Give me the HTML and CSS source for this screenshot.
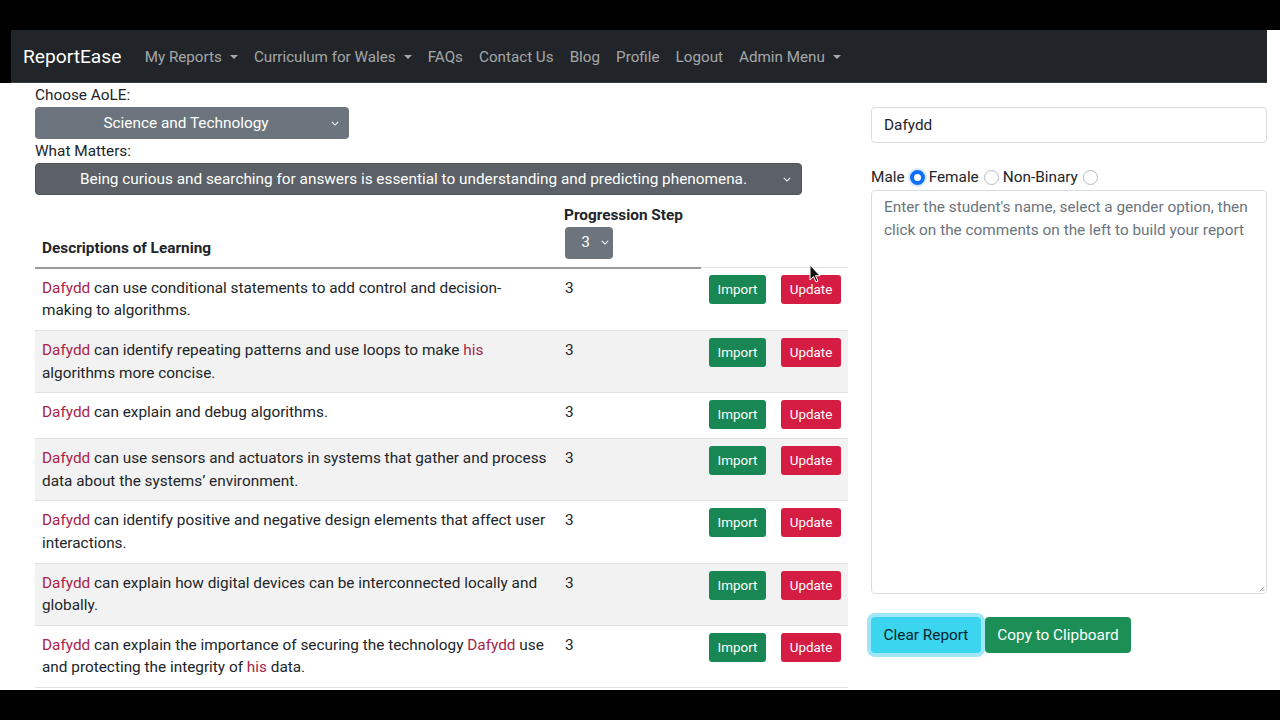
FILE: index.html
```html
<!DOCTYPE html>
<html>
<head>
<meta charset="utf-8">
<link rel="stylesheet" href="styles.css">
</head>
<body>
<div class="frame-top"></div>
<div class="page">
  <div class="header-row">
    <div class="edge"></div>
    <nav class="navbar">
      <span class="brand">ReportEase</span>
      <span class="nav-link">My Reports<span class="caret"></span></span>
      <span class="nav-link">Curriculum for Wales<span class="caret"></span></span>
      <span class="nav-link">FAQs</span>
      <span class="nav-link">Contact Us</span>
      <span class="nav-link">Blog</span>
      <span class="nav-link">Profile</span>
      <span class="nav-link">Logout</span>
      <span class="nav-link">Admin Menu<span class="caret"></span></span>
    </nav>
  </div>
  <div class="main">
    <div class="left">
      <div class="label">Choose AoLE:</div>
      <div class="select sel-aole"><span class="sel-text">Science and Technology</span><svg class="chev" viewBox="0 0 10 6" width="8" height="5"><path d="M1 1l4 4 4-4" fill="none" stroke="#fff" stroke-width="1.3"/></svg></div>
      <div class="label">What Matters:</div>
      <div class="select sel-matters"><span class="sel-text">Being curious and searching for answers is essential to understanding and predicting phenomena.</span><svg class="chev" viewBox="0 0 10 6" width="8" height="5"><path d="M1 1l4 4 4-4" fill="none" stroke="#fff" stroke-width="1.3"/></svg></div>
      <table class="dol">
        <colgroup><col class="c1"><col class="c2"><col class="c3"><col class="c4"></colgroup>
        <thead>
          <tr>
            <th class="th-desc">Descriptions of Learning</th>
            <th class="th-step">Progression Step
              <div class="select sel-step"><span class="sel-text">3</span><svg class="chev" viewBox="0 0 10 6" width="8" height="5"><path d="M1 1l4 4 4-4" fill="none" stroke="#fff" stroke-width="1.3"/></svg></div>
            </th>
          </tr>
        </thead>
        <tbody>
          <tr><td><span class="nm">Dafydd</span> can use conditional statements to add control and decision-making to algorithms.</td><td>3</td><td><span class="btn btn-imp">Import</span></td><td><span class="btn btn-upd">Update</span></td></tr>
          <tr><td><span class="nm">Dafydd</span> can identify repeating patterns and use loops to make <span class="nm">his</span> algorithms more concise.</td><td>3</td><td><span class="btn btn-imp">Import</span></td><td><span class="btn btn-upd">Update</span></td></tr>
          <tr><td><span class="nm">Dafydd</span> can explain and debug algorithms.</td><td>3</td><td><span class="btn btn-imp">Import</span></td><td><span class="btn btn-upd">Update</span></td></tr>
          <tr><td><span class="nm">Dafydd</span> can use sensors and actuators in systems that gather and process data about the systems’ environment.</td><td>3</td><td><span class="btn btn-imp">Import</span></td><td><span class="btn btn-upd">Update</span></td></tr>
          <tr><td><span class="nm">Dafydd</span> can identify positive and negative design elements that affect user interactions.</td><td>3</td><td><span class="btn btn-imp">Import</span></td><td><span class="btn btn-upd">Update</span></td></tr>
          <tr><td><span class="nm">Dafydd</span> can explain how digital devices can be interconnected locally and globally.</td><td>3</td><td><span class="btn btn-imp">Import</span></td><td><span class="btn btn-upd">Update</span></td></tr>
          <tr><td><span class="nm">Dafydd</span> can explain the importance of securing the technology <span class="nm">Dafydd</span> use and protecting the integrity of <span class="nm">his</span> data.</td><td>3</td><td><span class="btn btn-imp">Import</span></td><td><span class="btn btn-upd">Update</span></td></tr>
        </tbody>
      </table>
    </div>
    <div class="right">
      <div class="input">Dafydd</div>
      <div class="gender">
        <span>Male</span><span class="radio checked"></span>
        <span>Female</span><span class="radio"></span>
        <span>Non-Binary</span><span class="radio"></span>
      </div>
      <div class="textarea">Enter the student's name, select a gender option, then click on the comments on the left to build your report
        <svg class="grip" viewBox="0 0 8 8" width="7" height="7"><path d="M7 2L2 7M7 5L5 7" stroke="#888" stroke-width="1"/></svg>
      </div>
      <div class="actions">
        <span class="btn-lg btn-clear">Clear Report</span>
        <span class="btn-lg btn-copy">Copy to Clipboard</span>
      </div>
    </div>
  </div>
  <svg class="cursor" viewBox="0 0 12 19" width="12" height="19"><path d="M1 1v15l3.5-3.5 2.5 5.5 2-1-2.5-5.3H11z" fill="#111" stroke="#fff" stroke-width="1"/></svg>
</div>
<div class="frame-bottom"></div>
</body>
</html>
```
FILE: styles.css
```css
* { box-sizing: border-box; }
html, body { margin: 0; padding: 0; }
body {
  width: 1280px;
  height: 720px;
  overflow: hidden;
  background: #000;
  font-family: Roboto, "Liberation Sans", sans-serif;
  font-size: 15.35px;
  line-height: 22.8px;
  color: #212529;
}
.frame-top { height: 30px; background: #000; }
.frame-bottom { height: 30px; background: #000; }
.page {
  position: relative;
  height: 660px;
  background: #fff;
  overflow: hidden;
}
.header-row { display: flex; height: 53px; }
.edge { width: 11px; background: #000; }
.navbar {
  width: 1256px;
  background: #212529;
  display: flex;
  align-items: center;
  padding-left: 12px;
  padding-top: 2px;
  border-bottom: 1px solid #3a3e42;
  font-size: 15.2px;
}
.brand {
  color: #fff;
  font-size: 19.2px;
  margin-right: 15.5px;
}
.nav-link {
  color: rgba(255,255,255,0.6);
  padding: 0 7.8px;
  display: inline-flex;
  align-items: center;
}
.nav-link + .nav-link { margin-left: 0.5px; }
.caret {
  display: inline-block;
  margin-left: 8px;
  border-top: 4.6px solid rgba(255,255,255,0.6);
  border-left: 4.6px solid transparent;
  border-right: 4.6px solid transparent;
}
.main {
  display: flex;
  padding-left: 35px;
}
.left { width: 813px; }
.right {
  width: 396px;
  margin-left: 23px;
  padding-top: 24px;
}
.label { height: 24px; line-height: 24px; }
.select {
  display: flex;
  align-items: center;
  height: 32px;
  background: #6c757d;
  color: #fff;
  border-radius: 4px;
  padding: 0 10px 0 12px;
}
.sel-text { flex: 1; text-align: center; }
.sel-aole { width: 314px; }
.sel-aole .sel-text { padding-left: 2px; padding-right: 8px; }
.sel-matters { width: 767px; background: #5b6166; border: 1px solid #4d5357; }
.sel-matters .sel-text { padding-right: 4px; }
.sel-step { width: 48px; margin-left: 1px; padding: 0 4px 0 8px; font-weight: 400; }
.sel-step .sel-text { padding-right: 3px; }
.chev { flex: none; }
.dol {
  width: 813px;
  border-collapse: collapse;
  table-layout: fixed;
}
.c1 { width: 522px; }
.c2 { width: 144px; }
.c3 { width: 73px; }
.c4 { width: 74px; }
.dol th {
  text-align: left;
  vertical-align: bottom;
  padding: 9px 7px 7px 7px;
  font-weight: 700;
  border-bottom: 2px solid #9a9a9a;
}
.dol th.th-step { padding-bottom: 8px; }
.dol td {
  vertical-align: top;
  padding: 8px 7px 8px;
  line-height: 22.6px;
  border-top: 1px solid #dee2e6;
  border-bottom: 1px solid #dee2e6;
}
.dol td:nth-child(2) { padding-left: 8px; }
.dol td:nth-child(3), .dol td:nth-child(4) { padding-top: 7px; padding-bottom: 9px; }
.dol tbody tr:nth-child(even) td { background: #f2f2f2; }
.nm { color: #a8244a; }
.btn {
  display: inline-block;
  height: 29px;
  line-height: 29px;
  font-size: 13.4px;
  border-radius: 3px;
  color: #fff;
  text-align: center;
}
.btn-imp { background: #198754; width: 57px; margin-left: 1px; }
.btn-upd { background: #d51c43; width: 60px; }
.input {
  height: 36px;
  border: 1px solid #dadde0;
  border-radius: 4px;
  padding: 0 12px;
  line-height: 35px;
}
.gender {
  display: flex;
  align-items: center;
  margin-top: 23px;
  height: 23px;
}
.radio {
  width: 15px;
  height: 15px;
  border-radius: 50%;
  border: 1px solid #b8bcc0;
  background: #fff;
  margin: 0 4px 0 5px;
}
.radio.checked {
  border: 4px solid #0d6efd;
  background: #fff;
  box-shadow: 0 0 0 2px rgba(13,110,253,0.15);
}
.textarea {
  position: relative;
  margin-top: 1px;
  height: 404px;
  border: 1px solid #dadde0;
  border-radius: 4px;
  padding: 5px 12px;
  color: #6c757d;
}
.grip { position: absolute; right: 1px; bottom: 1px; }
.actions {
  display: flex;
  gap: 4px;
  margin-top: 23px;
}
.btn-lg {
  height: 36px;
  line-height: 36px;
  padding: 0 12px;
  border-radius: 4px;
}
.btn-clear {
  width: 110px;
  background: #3cd5f0;
  color: #05242a;
  text-align: center;
  box-shadow: 0 0 0 4px rgba(80,210,240,0.55);
}
.btn-copy {
  background: #1c8f56;
  color: #fff;
  width: 146px;
  text-align: center;
}
.cursor { position: absolute; left: 809px; top: 234px; }
```
